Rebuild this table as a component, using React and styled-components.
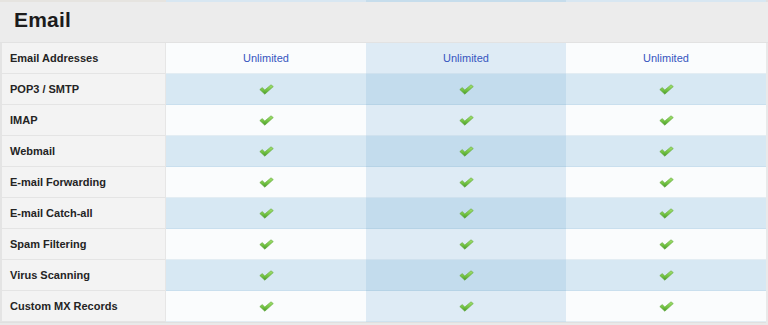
import React from "react";
import styled, { createGlobalStyle } from "styled-components";

const Global = createGlobalStyle`
  html, body { margin: 0; padding: 0; background: #e9e9e9; }
  body { font-family: "Liberation Sans", Arial, sans-serif; }
`;

const Page = styled.div`
  width: 768px;
  height: 325px;
  overflow: hidden;
  background: #e9e9e9;
  display: flex;
  flex-direction: column;
`;

const TopStrip = styled.div`
  display: grid;
  grid-template-columns: 166px 200px 200px 200px 2px;
  height: 2px;
`;

const StripCell = styled.div`
  background: ${(p) => p.$bg};
`;

const Header = styled.div`
  height: 41px;
  background: #ececec;
  display: flex;
  align-items: flex-start;
  padding: 6px 0 0 14px;
  border-bottom: 1px solid #e2e2e2;
  box-sizing: border-box;
`;

const Title = styled.h1`
  margin: 0;
  font-family: "Liberation Sans", Arial, sans-serif;
  font-weight: bold;
  font-size: 21px;
  line-height: 24px;
  color: #1c1c1c;
  letter-spacing: 0.2px;
`;

const Table = styled.div`
  display: grid;
  grid-template-columns: 166px 200px 200px 200px;
  grid-auto-rows: 31px;
  width: 766px;
  border-bottom: 1px solid #e0e0e0;
`;

const Label = styled.div`
  background: #f3f3f3;
  border-left: 2px solid #e4e4e4;
  border-right: 1px solid #e6e6e6;
  border-bottom: 1px solid #e4e4e4;
  box-sizing: border-box;
  display: flex;
  align-items: center;
  padding-left: 8px;
  font-size: 11px;
  font-weight: bold;
  color: #242424;
`;

const Cell = styled.div`
  background: ${(p) => p.$bg};
  border-bottom: 1px solid ${(p) => p.$line};
  box-sizing: border-box;
  display: flex;
  align-items: center;
  justify-content: center;
  font-size: 11px;
  color: #3656bf;
`;

const Check = () => (
  <svg width="15" height="11" viewBox="0 0 15 11">
    <defs>
      <linearGradient id="cg" x1="0" y1="0" x2="0" y2="1">
        <stop offset="0" stopColor="#a6e372" />
        <stop offset="0.55" stopColor="#74c443" />
        <stop offset="1" stopColor="#489a2a" />
      </linearGradient>
    </defs>
    <path
      d="M0.8 5.6 L3.2 3.6 L5.8 6 L12 0.8 L14.3 2.6 L5.8 10.2 Z"
      fill="url(#cg)"
      stroke="#62a63c"
      strokeWidth="0.6"
      strokeLinejoin="round"
    />
  </svg>
);

const rows = [
  "Email Addresses",
  "POP3 / SMTP",
  "IMAP",
  "Webmail",
  "E-mail Forwarding",
  "E-mail Catch-all",
  "Spam Filtering",
  "Virus Scanning",
  "Custom MX Records",
];

const colors = (col, odd) => {
  if (col === 1) return odd ? ["#c3dced", "#b6d3e6"] : ["#deebf5", "#cfe1ee"];
  return odd ? ["#d7e8f3", "#c9dfee"] : ["#fafcfd", "#e3edf3"];
};

export default function App() {
  return (
    <>
      <Global />
      <Page>
        <TopStrip>
          <StripCell $bg="#e6e4e0" />
          <StripCell $bg="#d8e7f2" />
          <StripCell $bg="#c6ddec" />
          <StripCell $bg="#d8e7f2" />
          <StripCell $bg="#e0e0e0" />
        </TopStrip>
        <Header>
          <Title>Email</Title>
        </Header>
        <Table>
          {rows.map((r, i) => (
            <React.Fragment key={r}>
              <Label>{r}</Label>
              {[0, 1, 2].map((c) => {
                const [bg, line] = colors(c, i % 2 === 1);
                return (
                  <Cell key={c} $bg={bg} $line={line}>
                    {i === 0 ? "Unlimited" : <Check />}
                  </Cell>
                );
              })}
            </React.Fragment>
          ))}
        </Table>
      </Page>
    </>
  );
}
